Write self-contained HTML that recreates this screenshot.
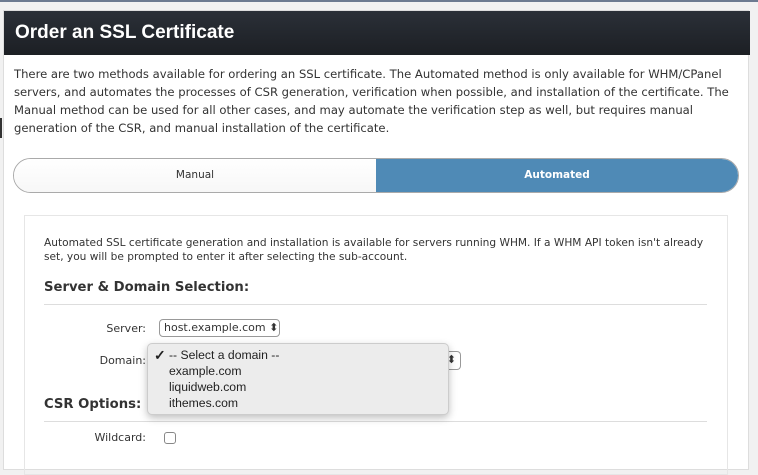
<!DOCTYPE html>
<html><head><style>
*{margin:0;padding:0;box-sizing:border-box}
body{width:758px;height:461px;overflow:hidden;background:#f1f1f1;font-family:"DejaVu Sans","Liberation Sans",sans-serif;color:#333;position:relative}
.top{position:absolute;left:0;top:0;width:758px;height:2px;background:#6c7a90}
.panel{position:absolute;left:3px;top:10px;width:746px;height:460px;background:#fff;border:1px solid #ddd}
.hdr{position:absolute;left:0;top:0;width:746px;height:44px;background:linear-gradient(#2b3038,#1c1f24);color:#fff;font-family:"Liberation Sans",sans-serif;font-size:19px;font-weight:bold;padding:11px 0 0 11px}
.intro{position:absolute;left:10px;top:54px;width:720px;font-size:11.6px;line-height:18px;color:#333}
.tabs{position:absolute;left:9px;top:147px;width:726px;height:35px;border:1px solid #aaa;border-radius:18px;overflow:hidden;display:flex;font-size:10.5px}
.tabs div{flex:1;text-align:center;line-height:33px}
.t1{background:linear-gradient(#fff,#f7f7f7);color:#333}
.t2{background:#4f8ab6;color:#fff;font-weight:bold}
.inner{position:absolute;left:20px;top:204px;width:704px;height:260px;border:1px solid #e6e6e6}
.p{position:absolute;left:19px;top:20px;font-size:10.6px;line-height:14px;width:668px}
h3{position:absolute;left:19px;font-size:13.2px;font-weight:bold;color:#333}
.hr{position:absolute;left:19px;width:663px;height:1px;background:#ddd}
.lbl{position:absolute;font-size:11px;text-align:right;width:100px}
.sel{position:absolute;border:1px solid #999;border-radius:4px;font-size:11px;padding:1px 4px;background:#fff;white-space:nowrap}
.menu{position:absolute;left:147px;top:343px;width:302px;height:72px;background:#ececec;border:1px solid #ccc;border-radius:5px;box-shadow:0 3px 8px rgba(0,0,0,.25);font-family:"Liberation Sans",sans-serif;font-size:12.2px;color:#222}
.menu div{position:absolute;left:21px}
</style></head><body>
<div class="top"></div>
<div style="position:absolute;left:0;top:118px;width:2px;height:20px;background:#333"></div>
<div class="panel">
<div class="hdr">Order an SSL Certificate</div>
<div class="intro">There are two methods available for ordering an SSL certificate. The Automated method is only available for WHM/CPanel servers, and automates the processes of CSR generation, verification when possible, and installation of the certificate. The Manual method can be used for all other cases, and may automate the verification step as well, but requires manual generation of the CSR, and manual installation of the certificate.</div>
<div class="tabs"><div class="t1">Manual</div><div class="t2">Automated</div></div>
<div class="inner">
<div class="p">Automated SSL certificate generation and installation is available for servers running WHM. If a WHM API token isn't already set, you will be prompted to enter it after selecting the sub-account.</div>
<h3 style="top:64px">Server &amp; Domain Selection:</h3>
<div class="hr" style="top:88px"></div>
<div class="lbl" style="left:21px;top:106px">Server:</div>
<div class="sel" style="left:134px;top:103px;width:121px;height:18px;line-height:14px">host.example.com ⬍</div>
<div class="lbl" style="left:21px;top:138px">Domain:</div>
<div class="sel" style="left:410px;top:135px;width:26px;height:19px;border-left:none;border-radius:0 4px 4px 0;text-align:right">⬍</div>
<h3 style="top:181px">CSR Options:</h3>
<div class="hr" style="top:205px"></div>
<div class="lbl" style="left:21px;top:215px">Wildcard:</div>
<div style="position:absolute;left:139px;top:216px;width:12px;height:12px;border:1px solid #888;border-radius:3px;background:#fff"></div>
</div>
</div>
<div class="menu">
<div style="left:6px;top:3px;font-size:14px;font-weight:bold">✓</div>
<div style="top:4px">-- Select a domain --</div>
<div style="top:20px">example.com</div>
<div style="top:36px">liquidweb.com</div>
<div style="top:52px">ithemes.com</div>
</div>
</body></html>
